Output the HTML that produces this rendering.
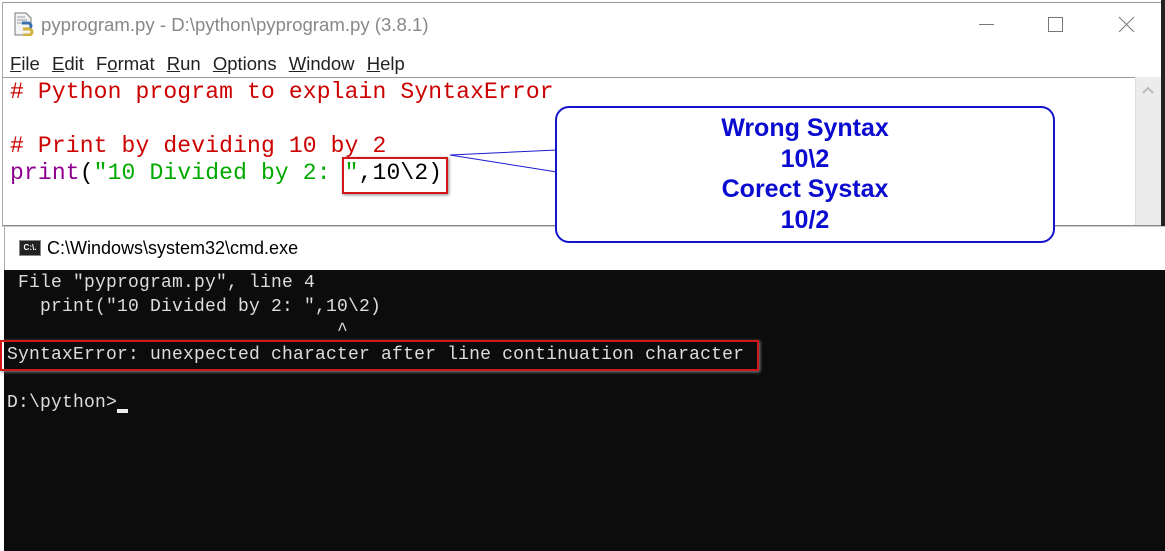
<!DOCTYPE html>
<html><head><meta charset="utf-8"><style>
*{margin:0;padding:0;box-sizing:border-box}
body{width:1165px;height:551px;overflow:hidden;background:#fff;position:relative;font-family:"Liberation Sans",sans-serif}
.abs{position:absolute}
.mono{font-family:"Liberation Mono",monospace;white-space:pre}
</style></head><body>
<div class="abs" style="left:1161px;top:0;width:4px;height:230px;background:#222"></div>
<div class="abs" style="left:2px;top:2px;width:1159px;height:1px;background:#999"></div>
<div class="abs" style="left:2px;top:2px;width:1px;height:225px;background:#aaa"></div>
<svg class="abs" style="left:14px;top:12px" width="20" height="24" viewBox="0 0 20 24">
<path d="M1 1h11l5 5v17H1z" fill="#f4f4f4" stroke="#777"/>
<path d="M3 5h8M3 8h10M3 11h6" stroke="#99a" />
<path d="M8 11h6a3 3 0 0 1 0 6H9" fill="none" stroke="#3a6fb0" stroke-width="3"/>
<path d="M9 17h6a3 3 0 0 1 0 6H9" fill="none" stroke="#d2b13a" stroke-width="3"/>
</svg>
<div class="abs" style="left:41px;top:14px;font-size:18.6px;color:#888">pyprogram.py - D:\python\pyprogram.py (3.8.1)</div>
<div class="abs" style="left:979px;top:24px;width:15px;height:1px;background:#777"></div>
<div class="abs" style="left:1048px;top:17px;width:15px;height:15px;border:1px solid #777"></div>
<svg class="abs" style="left:1118px;top:16px" width="17" height="17"><path d="M1 1L16 16M16 1L1 16" stroke="#777"/></svg>
<div class="abs" style="left:10px;top:53px;font-size:18.5px;color:#222;word-spacing:7px"><u>F</u>ile <u>E</u>dit F<u>o</u>rmat <u>R</u>un <u>O</u>ptions <u>W</u>indow <u>H</u>elp</div>
<div class="abs" style="left:3px;top:77px;width:1132px;height:1px;background:#999"></div>
<div class="abs" style="left:1135px;top:77px;width:26px;height:148px;background:#ececec;border-left:1px solid #ddd"></div>
<svg class="abs" style="left:1142px;top:86px" width="12" height="8"><path d="M1 7L6 2L11 7" stroke="#bbb" stroke-width="2" fill="none"/></svg>
<div class="abs" style="left:3px;top:225px;width:1158px;height:1px;background:#888"></div>
<div class="abs mono" style="left:10px;top:79px;font-size:23px;line-height:27px;letter-spacing:0.14px;color:#cc0000"># Python program to explain SyntaxError

# Print by deviding 10 by 2</div>
<div class="abs mono" style="left:10px;top:160px;font-size:23px;line-height:27px;letter-spacing:0.14px"><span style="color:#900090">print</span><span style="color:#000">(</span><span style="color:#00aa00">"10 Divided by 2: "</span><span style="color:#000">,10\2)</span></div>
<div class="abs" style="left:342px;top:157px;width:106px;height:37px;border:2px solid #d01818;box-shadow:1px 1px 3px #888"></div>
<svg class="abs" style="left:0;top:0" width="1165" height="551">
<path d="M450 155L557 150M450 155L557 172" stroke="#1a1ad0" stroke-width="1" fill="none"/>
</svg>
<div class="abs" style="left:4px;top:226px;width:1161px;height:44px;background:#fff;border-left:1px solid #aaa;border-top:1px solid #ccc"></div>
<div class="abs" style="left:19px;top:240px;width:22px;height:16px;background:#222;border:1px solid #888;color:#fff;font-size:8px;font-weight:bold;line-height:14px;text-align:center">C:\.</div>
<div class="abs" style="left:47px;top:238px;font-size:18px;color:#000">C:\Windows\system32\cmd.exe</div>
<div class="abs" style="left:4px;top:270px;width:1161px;height:281px;background:#0c0c0c"></div>
<div class="abs mono" style="left:7px;top:271px;font-size:18px;line-height:24px;letter-spacing:0.2px;color:#ddd"> File "pyprogram.py", line 4
   print("10 Divided by 2: ",10\2)
                              ^
SyntaxError: unexpected character after line continuation character

D:\python></div>
<div class="abs" style="left:117px;top:409px;width:11px;height:4px;background:#eee"></div>
<div class="abs" style="left:0px;top:340px;width:759px;height:31px;border:2px solid #d01818;box-shadow:1px 1px 3px #888"></div>
<div class="abs" style="left:555px;top:106px;width:500px;height:137px;border:2px solid #1414cc;border-radius:14px;background:#fff;color:#0a0ad0;font-weight:bold;font-size:25px;line-height:30.5px;text-align:center;padding-top:5px">Wrong Syntax<br>10\2<br>Corect Systax<br>10/2</div>
</body></html>
